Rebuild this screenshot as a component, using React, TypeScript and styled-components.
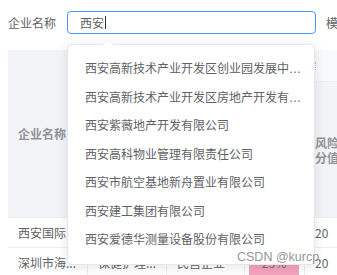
import React from "react";
import styled, { createGlobalStyle } from "styled-components";

const Global = createGlobalStyle`
  html, body { margin: 0; padding: 0; background: #fff; overflow: hidden; }
  body { width: 337px; height: 275px; font-family: "Noto Sans CJK SC", "Noto Sans", sans-serif; }
  * { box-sizing: border-box; }
`;

const Page = styled.div`
  position: relative;
  width: 337px;
  height: 275px;
  overflow: hidden;
  padding: 11px 0 0 8px;
`;

const FormRow = styled.div`
  display: flex;
  align-items: center;
  height: 23px;
  white-space: nowrap;
`;

const Label = styled.span`
  width: 59px;
  flex: none;
  font-size: 12px;
  color: #606266;
  line-height: 23px;
`;

const NextLabel = styled(Label)`
  margin-left: 10px;
`;

const InputBox = styled.div`
  width: 249px;
  height: 23px;
  flex: none;
  border: 1px solid #409eff;
  border-radius: 4px;
  padding-left: 12px;
  display: flex;
  align-items: center;
  font-size: 12px;
  color: #606266;
`;

const Caret = styled.span`
  display: inline-block;
  width: 1px;
  height: 13px;
  background: #303133;
  margin-left: 1px;
`;

const Table = styled.div`
  margin-top: 16px;
  width: 400px;
  display: grid;
  grid-template-columns: 80px 79px 78px 60px 50px 60px;
  font-size: 12px;
  color: #606266;
`;

const HeadCell = styled.div<{ $span?: boolean; $top?: boolean }>`
  background: ${(p) => (p.$top ? "#f8f9fb" : "#f3f4f7")};
  color: #909399;
  font-weight: 600;
  display: flex;
  align-items: center;
  padding: 0 10px;
  line-height: 15px;
  height: ${(p) => (p.$span ? "168px" : p.$top ? "32px" : "136px")};
  grid-row: ${(p) => (p.$span ? "1 / span 2" : "auto")};
  border-bottom: 1px solid #ebeef5;
`;

const GroupHead = styled(HeadCell)`
  grid-column: 2 / span 5;
`;

const Mark = styled.span`
  position: relative;
  left: 217px;
  width: 1px;
  height: 8px;
  border-left: 1px dotted #b8bcc4;
`;

const Cell = styled.div`
  height: 30px;
  display: flex;
  align-items: center;
  padding: 0 10px;
  border-bottom: 1px solid #ebeef5;
  border-right: 1px solid #ebeef5;
  white-space: nowrap;
  overflow: hidden;
`;

const RateCell = styled(Cell)`
  padding: 0 5px 0 4px;
`;

const Rate = styled.div`
  background: #f4a3bf;
  height: 100%;
  flex: 1;
  display: flex;
  align-items: center;
  justify-content: center;
  color: #7a6f73;
`;

const Dropdown = styled.div`
  position: absolute;
  left: 67px;
  top: 44px;
  width: 248px;
  padding: 10px 0 9px;
  background: #fff;
  border: 1px solid #e4e7ed;
  border-radius: 4px;
  box-shadow: 0 2px 12px rgba(0, 0, 0, 0.1);
  z-index: 2;
`;

const Arrow = styled.div`
  position: absolute;
  top: -6px;
  left: 34px;
  width: 0;
  height: 0;
  border-left: 6px solid transparent;
  border-right: 6px solid transparent;
  border-bottom: 6px solid #ebeef5;
  &::after {
    content: "";
    position: absolute;
    left: -5px;
    top: 1px;
    border-left: 5px solid transparent;
    border-right: 5px solid transparent;
    border-bottom: 5px solid #fff;
  }
`;

const Item = styled.div`
  height: 28.5px;
  line-height: 28.5px;
  padding: 0 12px 0 17px;
  font-family: "Liberation Sans", "Noto Sans CJK SC", sans-serif;
  font-size: 12px;
  color: #606266;
  white-space: nowrap;
  overflow: hidden;
  text-overflow: ellipsis;
`;

const Watermark = styled.div`
  position: absolute;
  left: 237px;
  top: 250px;
  font-family: "Liberation Sans", Arial, sans-serif;
  font-size: 12.5px;
  color: rgba(135, 135, 135, 0.9);
  text-shadow: 0 0 1px rgba(255, 255, 255, 0.8);
  z-index: 3;
  white-space: nowrap;
`;

const items = [
  "西安高新技术产业开发区创业园发展中心有限公司",
  "西安高新技术产业开发区房地产开发有限公司",
  "西安紫薇地产开发有限公司",
  "西安高科物业管理有限责任公司",
  "西安市航空基地新舟置业有限公司",
  "西安建工集团有限公司",
  "西安爱德华测量设备股份有限公司",
];

export default function App() {
  return (
    <>
      <Global />
      <Page>
        <FormRow>
          <Label>企业名称</Label>
          <InputBox>
            西安
            <Caret />
          </InputBox>
          <NextLabel>模型名称</NextLabel>
        </FormRow>
        <Table>
          <HeadCell $span>企业名称</HeadCell>
          <GroupHead $top>
            <Mark />
          </GroupHead>
          <HeadCell />
          <HeadCell />
          <HeadCell />
          <HeadCell>风险分值</HeadCell>
          <HeadCell>操作</HeadCell>

          <Cell>西安国际</Cell>
          <Cell />
          <Cell />
          <RateCell />
          <Cell>20</Cell>
          <Cell />

          <Cell>深圳市海...</Cell>
          <Cell>保健护理...</Cell>
          <Cell>民营企业</Cell>
          <RateCell>
            <Rate>25%</Rate>
          </RateCell>
          <Cell>20</Cell>
          <Cell />
        </Table>
        <Dropdown>
          <Arrow />
          {items.map((t) => (
            <Item key={t}>{t}</Item>
          ))}
        </Dropdown>
        <Watermark>CSDN @kurcp</Watermark>
      </Page>
    </>
  );
}
